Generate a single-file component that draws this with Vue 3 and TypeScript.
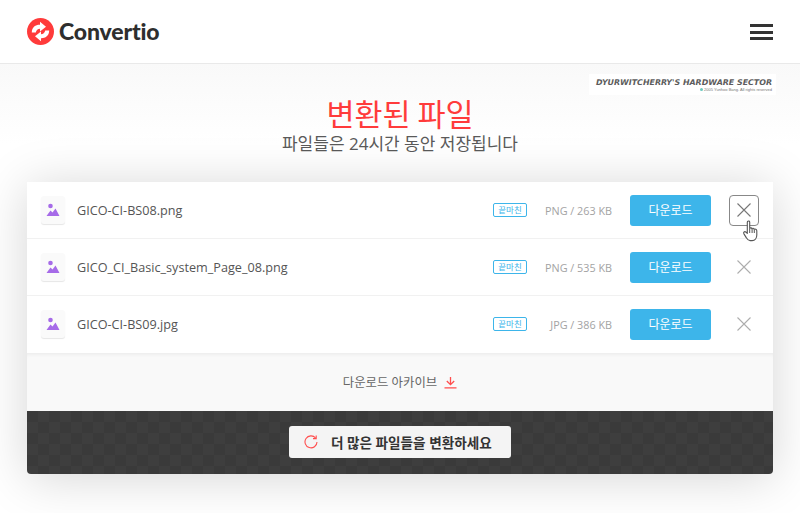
<script setup lang="ts">
interface FileRow { name: string; info: string; hover?: boolean }
const files: FileRow[] = [
  { name: 'GICO-CI-BS08.png', info: 'PNG / 263 KB', hover: true },
  { name: 'GICO_CI_Basic_system_Page_08.png', info: 'PNG / 535 KB' },
  { name: 'GICO-CI-BS09.jpg', info: 'JPG / 386 KB' },
]
</script>

<template>
  <div class="page">
    <header class="top">
      <div class="brand">
        <svg class="logo" width="27" height="27" viewBox="0 0 27 27">
          <circle cx="13.5" cy="13.5" r="13.5" fill="#ff3b3b" />
          <path d="M4.8 14.5 C4.8 9 9 6.6 13 6.8 L13 3.8 L19 8.8 L13 13.6 L13 10.8 C10.8 10.8 9.2 12.2 8.8 14.5 Z" fill="#fff" />
          <path d="M22.2 12.5 C22.2 18 18 20.4 14 20.2 L14 23.2 L8 18.2 L14 13.4 L14 16.2 C16.2 16.2 17.8 14.8 18.2 12.5 Z" fill="#fff" />
        </svg>
        <span class="brand-name">Convertio</span>
      </div>
      <div class="burger"><i></i><i></i><i></i></div>
    </header>

    <main class="body">
      <div class="mark">
        <span class="mark-title">DYURWITCHERRY'S HARDWARE SECTOR</span>
        <span class="mark-sub"><b class="dot"></b>2005 Yunhoo Bang. All rights reserved</span>
      </div>
      <h1 class="title">변환된 파일</h1>
      <p class="sub">파일들은 24시간 동안 저장됩니다</p>

      <section class="card">
        <div v-for="f in files" :key="f.name" class="row">
          <div class="thumb">
            <svg width="14" height="14" viewBox="0 0 14 14">
              <circle cx="4.5" cy="3" r="2.3" fill="#a66be8" />
              <path d="M0.5 13 L4.5 7.5 L6.5 9.5 L9.5 5.5 L13.5 13 Z" fill="#a66be8" />
            </svg>
          </div>
          <span class="name">{{ f.name }}</span>
          <span class="tag">끝마친</span>
          <span class="info">{{ f.info }}</span>
          <button class="dl">다운로드</button>
          <div class="close" :class="{ hover: f.hover }">
            <svg width="14" height="14" viewBox="0 0 14 14">
              <path d="M0.5 0.5 L13.5 13.5 M13.5 0.5 L0.5 13.5" :stroke="f.hover ? '#777' : '#adadad'" stroke-width="1.1" fill="none" />
            </svg>
            <svg v-if="f.hover" class="cursor" width="17" height="22" viewBox="0 0 16 22">
              <path d="M5 1.5 C6 0.6 7.2 1 7.2 2.2 L7.2 8.2 C8 7.6 9 7.8 9.4 8.6 C10.2 8 11.2 8.3 11.6 9.2 C12.6 8.8 14.2 9.3 14.3 10.8 L14.3 15 C14.3 18 12.6 20.6 9.6 20.6 L7.6 20.6 C5.4 20.6 4.6 19 3.6 17.4 L1.3 13.6 C0.7 12.4 2 11 3.3 12 L4.8 13.4 L4.8 2.4 Z" fill="#fff" stroke="#555" stroke-width="1.1" stroke-linejoin="round" />
              <path d="M7.2 8.4 V13 M9.6 8.8 V13 M11.8 9.4 V13" stroke="#555" stroke-width="1" fill="none" />
            </svg>
          </div>
        </div>

        <div class="archive">
          <span>다운로드 아카이브</span>
          <svg width="13" height="13" viewBox="0 0 13 13">
            <path d="M6.5 1 V8.5 M2.8 5 L6.5 8.7 L10.2 5 M0.5 11.8 H12.5" stroke="#ff4d4d" stroke-width="1.3" fill="none" />
          </svg>
        </div>

        <div class="more">
          <button class="more-btn">
            <svg width="14" height="14" viewBox="0 0 14 14">
              <path d="M11.6 3 A6 6 0 1 0 13 7" stroke="#ff4d4d" stroke-width="1.1" fill="none" />
              <path d="M12.2 0.4 V3.6 H9" stroke="#ff4d4d" stroke-width="1.1" fill="none" />
            </svg>
            <span>더 많은 파일들을 변환하세요</span>
          </button>
        </div>
      </section>
    </main>
  </div>
</template>

<style scoped>
.page {
  width: 800px;
  height: 513px;
  overflow: hidden;
  background: #fff;
  font-family: "Open Sans", "Noto Sans CJK KR", sans-serif;
  color: #555;
}
.top {
  height: 63px;
  border-bottom: 1px solid #e9e9e9;
  background: #fff;
  display: flex;
  align-items: center;
  justify-content: space-between;
  padding: 0 27px;
  box-sizing: content-box;
}
.brand { display: flex; align-items: center; gap: 5px; }
.logo { display: block; margin-top: -1px; }
.brand-name {
  font-family: "Lato", sans-serif;
  font-weight: 900;
  font-size: 23px;
  color: #2e2e2e;
  letter-spacing: -0.15px;
  line-height: 27px;
}
.burger { display: flex; flex-direction: column; gap: 3.5px; width: 23px; margin-top: 1px; }
.burger i { display: block; height: 3px; background: #333; }
.body {
  position: relative;
  height: 449px;
  box-sizing: border-box;
  padding: 31px 27px 0;
  background: linear-gradient(#f9f9f9, #fff 80px);
  display: flex;
  flex-direction: column;
  align-items: center;
}
.mark {
  position: absolute;
  left: 589px;
  top: 10px;
  width: 187px;
  height: 21px;
  background: #fff;
  display: flex;
  flex-direction: column;
  align-items: flex-end;
  padding-right: 4px;
  box-sizing: border-box;
}
.mark-title {
  font-family: "DejaVu Sans", sans-serif;
  font-weight: 700;
  font-style: italic;
  font-size: 7.9px;
  line-height: 9px;
  color: #5c5c5c;
  white-space: nowrap;
  margin-top: 4px;
}
.mark-sub {
  font-family: "Liberation Sans", sans-serif;
  font-size: 4px;
  line-height: 5px;
  color: #777;
  white-space: nowrap;
  display: flex;
  align-items: center;
  gap: 1px;
}
.dot {
  width: 3px;
  height: 3px;
  border-radius: 50%;
  background: #6cc9c0;
}
.title {
  margin: 0;
  font-family: "Noto Sans CJK KR", sans-serif;
  font-weight: 400;
  font-size: 30.5px;
  line-height: 37px;
  color: #ff3b3b;
}
.sub {
  margin: 0;
  font-size: 17px;
  line-height: 24px;
  color: #5a5a5a;
  font-family: "Open Sans", "Noto Sans CJK KR", sans-serif;
}
.card {
  width: 746px;
  margin-top: 26px;
  border-radius: 4px;
  background: #fff;
  box-shadow: 0 4px 50px rgba(0, 0, 0, 0.17);
}
.row {
  height: 57px;
  box-sizing: border-box;
  display: flex;
  align-items: center;
  padding: 0 14px;
  border-bottom: 1px solid #f1f1f1;
  background: #fff;
}
.row:nth-child(3) { border-bottom-color: #fff; }
.thumb {
  width: 24px;
  height: 28px;
  border-radius: 3px;
  background: #fafafa;
  box-shadow: 0 1px 1px rgba(0, 0, 0, 0.1);
  display: flex;
  align-items: center;
  justify-content: center;
  flex: none;
}
.name {
  margin-left: 12px;
  font-size: 12.65px;
  color: #555;
  flex: 1;
  white-space: nowrap;
}
.tag {
  width: 34px;
  height: 14px;
  box-sizing: border-box;
  border: 1px solid #3db5ea;
  border-radius: 2px;
  color: #3db5ea;
  font-size: 8.5px;
  line-height: 12px;
  text-align: center;
  flex: none;
}
.info {
  width: 85px;
  text-align: right;
  font-size: 10.8px;
  color: #a3a3a3;
  white-space: nowrap;
  flex: none;
}
.dl {
  margin-left: 18px;
  width: 81px;
  height: 31px;
  border: 0;
  border-radius: 3px;
  background: #3db5ea;
  color: #fff;
  font-family: inherit;
  font-size: 12px;
  padding: 0;
  flex: none;
}
.close {
  position: relative;
  margin-left: 18px;
  width: 30px;
  height: 31px;
  box-sizing: border-box;
  border: 1px solid transparent;
  border-radius: 4px;
  display: flex;
  align-items: center;
  justify-content: center;
  flex: none;
}
.close.hover { border-color: #888; }
.cursor {
  position: absolute;
  left: 12px;
  top: 24px;
}
.archive {
  height: 58px;
  background: #f9f9f9;
  box-shadow: inset 0 4px 4px -3px rgba(0, 0, 0, 0.07);
  display: flex;
  align-items: center;
  justify-content: center;
  gap: 7px;
  font-size: 12.4px;
  color: #666;
}
.more {
  height: 63px;
  border-radius: 0 0 4px 4px;
  background-color: #3a3a3a;
  background-image: conic-gradient(#3e3e3e 25%, #3a3a3a 0 50%, #3e3e3e 0 75%, #3a3a3a 0);
  background-size: 22px 22px;
  display: flex;
  align-items: center;
  justify-content: center;
  padding-bottom: 1px;
  box-sizing: border-box;
}
.more-btn {
  width: 222px;
  height: 32px;
  border: 0;
  border-radius: 3px;
  background: #f4f4f4;
  display: flex;
  align-items: center;
  gap: 13px;
  padding: 0 0 0 15px;
  box-sizing: border-box;
  font-family: inherit;
  font-weight: 700;
  font-size: 13.6px;
  color: #333;
}
</style>
